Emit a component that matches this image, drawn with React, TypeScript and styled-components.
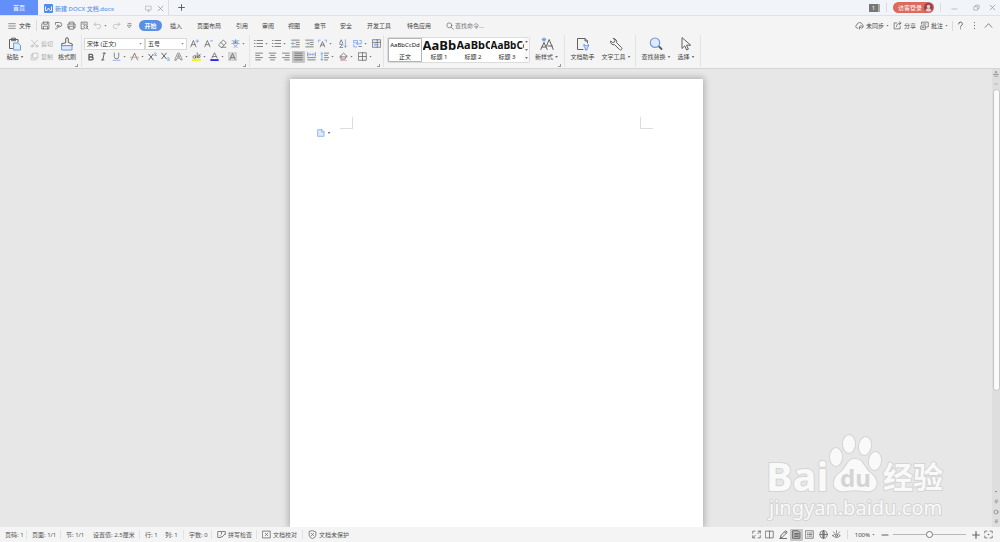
import React from "react";
import styled, { createGlobalStyle, css } from "styled-components";

const Global = createGlobalStyle`
  * { box-sizing: border-box; }
  html, body { margin: 0; padding: 0; }
  body, button, select, input {
    font-family: "Noto Sans", "Noto Sans CJK SC", sans-serif;
    font-size: 6px;
    line-height: 8px;
    color: #444;
  }
  button {
    margin: 0; padding: 0; border: 0; background: none;
    display: inline-flex; align-items: center; justify-content: center;
    white-space: nowrap; cursor: pointer;
  }
  svg { display: block; flex: none; }
`;

const INK = "#606060";
const BLUE = "#6a9be8";

/* ---------- icons ---------- */

const Svg = styled.svg<{ $size: number }>`
  width: ${(p) => p.$size}px;
  height: ${(p) => p.$size}px;
  fill: none;
  stroke: ${INK};
  stroke-width: 1;
  stroke-linecap: round;
  stroke-linejoin: round;
  .b { stroke: ${BLUE}; }
  .f { fill: ${INK}; stroke: none; }
  .lb { fill: #dfeafb; stroke: ${BLUE}; }
`;

const shapes: Record<string, React.ReactNode> = {
  menu: <path d="M1 2.5h10M1 6h10M1 9.5h10" />,
  save: <><path d="M1.5 3 3 1.5h7.5v9h-9zM3.5 1.5v2.8h5V1.5M3.2 10.500V7h5.600v3.500" /></>,
  output: <><path d="M2 4.500V2h5.500a2.800 2.800 0 0 1 0 5.600H5.500" /><path d="M2 10.500c2.500 0 3.500-1 3.500-4M3.500 7l2-2 2 2" /></>,
  print: <><path d="M3 4V1.500h6V4M3 9H1.200V4h9.600v5H9" /><path d="M3 7h6v3.800H3zM8.500 5.500h.5" /></>,
  preview: <><path d="M5 10.500H1.500v-9h8V5" /><circle cx="7.500" cy="7.500" r="2.300" /><path d="m9.300 9.300 1.800 1.800M3.500 4h3" /></>,
  undo: <path stroke="#b8b8b8" d="M3.500 2 1.500 4.500l2.500 2M1.500 4.500h6a2.700 2.700 0 0 1 0 5.500H6" />,
  redo: <path stroke="#b8b8b8" d="m8.500 2 2 2.500-2.500 2M10.500 4.500h-6a2.700 2.700 0 0 0 0 5.500H6" />,
  more: <path d="M3.500 2.500h5M3 5.500h6L6 9.500z" />,
  split: <path d="M1 7h10M3 10.500h6M6 1v4M4 3l2-2 2 2" />,
  search: <><circle cx="5" cy="5" r="3.700" /><path d="m7.800 7.800 3.200 3.200" /></>,
  cloud: <><path d="M4 9.500H3a2.300 2.300 0 0 1-.3-4.500A3.500 3.500 0 0 1 9.500 4.500a2.500 2.500 0 0 1 1 4" /><path d="M6 8.500a2 2 0 1 1 3 1.500M6 10.800V8.500h2" /></>,
  share: <path d="M5 2.500H1.500v8h8V7M4.500 7.500c0-3 2-4.500 6-4.500M8.500 1l2.200 2-2.200 2" />,
  note: <><path d="M2 4V1.500h9v6.500H9M4 4h4" /><path d="M1 10.500v-4h6.500v4zM3 8.500h2.500" /></>,
  help: <path d="M3.500 4A2.500 2.500 0 1 1 7 6.200Q6 6.800 6 8M6 10.300v.2" strokeWidth="1.300" />,
  dots: <path d="M6 2v.1M6 6v.1M6 10v.1" strokeWidth="1.600" />,
  up: <path d="m1.500 8.500 4.500-5 4.500 5" />,
  monitor: <path stroke="#a0a5b0" d="M1.500 2h9v6.500h-9zM4.500 10.500h3M6 8.500v2" />,
  close: <path stroke="#8c8c8c" strokeWidth="1.200" d="m2 2 8 8M10 2l-8 8" />,
  plus: <path d="M6 1v10M1 6h10" strokeWidth="1.700" />,
  minus: <path d="M1.500 6h9" strokeWidth="1.800" />,
  min: <path stroke="#999" d="M1.500 8.500h9" />,
  restore: <path stroke="#999" d="M2 4.500h6v6H2zM4.500 4.500V2h6v6H8" />,
  cut: <g stroke="#bbb"><path d="m2 1.500 6 7M10 1.500l-6 7" /><circle cx="2.800" cy="9.500" r="1.400" /><circle cx="9.200" cy="9.500" r="1.400" /></g>,
  copy: <g stroke="#bbb"><path d="M4 1.500h6.500V8H4z" /><path d="M4 3.500H1.500v7H8V8" /></g>,
  grow: <><path d="m1 10.500 3.500-8.500L8 10.500M2.200 7.500h4.600" /><path className="b" d="M8 2.800h3.500M9.700 1v3.600" /></>,
  shrink: <><path d="m1 10.500 3.500-8.500L8 10.500M2.200 7.500h4.600" /><path className="b" d="M8.500 2.500h3" /></>,
  eraser: <path d="m1 7.500 6-6 4 3.500-5.500 6H4zM3.800 4.700l4 3.700M5.500 11h5" />,
  pinyin: <><path className="b" d="M1.500 2.500h9M6 .8v4.700M1 6h10M3.500 7.500l5 4M8.500 7.500l-5 4" /><path d="M3.500 4.300h5" /></>,
  bold: <path strokeWidth="2" d="M3 2h3.500a2 2 0 0 1 0 4H3zM3 6h4a2.200 2.200 0 0 1 0 4.400H3z" />,
  italic: <path strokeWidth="1.300" d="M5.500 1.500h3M3.500 10.500h3M7 1.500l-2 9" />,
  underline: <><path d="M3 1.500v4.500a3 3 0 0 0 6 0V1.500" /><path className="b" d="M1.500 11h9" /></>,
  strike: <><path d="m2 10.500 4-9 4 9" /><path stroke="#e08080" d="M.5 7h11" /></>,
  sup: <><path strokeWidth="1.300" d="m1 3 6 7.500M7 3l-6 7.500" /><path className="b" d="M8.500 1.500q2-1 2.500.5 0 1-2.500 2.500h3" /></>,
  sub: <><path strokeWidth="1.300" d="m1 1.500 6 7.500M7 1.500l-6 7.500" /><path className="b" d="M8.500 8q2-1 2.500.5 0 1-2.500 2.500h3" /></>,
  effect: <path d="M1 10.500 4.800 1.500h2.400l3.800 9H8.800L8 8.200H4.200l-1 2.300zM5 6.300 6 3.500l1 2.800z" strokeWidth=".8" />,
  highlight: <><path fill="#f2f233" stroke="none" d="M0 9h12v3H0z" /><path d="M5 7.500A1.900 1.900 0 1 0 1.300 7 1.900 1.900 0 0 0 5 7M5 4.500V8M7 1v6.500M7 6a1.900 1.900 0 1 0 1.500-2" /><path d="m8 7 3-4" /></>,
  color: <><path d="M2.500 8 6 1l3.500 7M3.700 6h4.600" /><path fill="#2a2af0" stroke="none" d="M.5 9.500h11V12H.5z" /></>,
  shade: <><path fill="#d4d4d4" stroke="none" d="M0 0h12v12H0z" /><path d="M2.500 10 6 2l3.500 8M3.700 7.500h4.600" /></>,
  bullets: <><path d="M4 2h7.500M4 6h7.500M4 10h7.500" /><path strokeWidth="1.600" d="M1 2h.2M1 6h.2M1 10h.2" /></>,
  outdent: <><path d="M1 1.500h10M7 4.500h4M7 7.500h4M1 10.500h10" /><path className="b" d="M1 6h4.500M3 4 1 6l2 2" /></>,
  indent: <><path d="M1 1.500h10M7 4.500h4M7 7.500h4M1 10.500h10" /><path className="b" d="M1 6h4.500M3.500 4l2 2-2 2" /></>,
  scaleA: <><path d="m3 10.500 3-7 3 7M4 8h4" /><path className="b" d="M.5 4V1.500H3M9 1.500h2.500V4" /></>,
  sort: <><path d="m1 5.500 2-4.500 2 4.500M1 7h4l-4 4.500h4" /><path className="b" d="M8.500 1v10M6.500 9l2 2 2-2" /></>,
  arrange: <><path className="b" d="M1 2h5v3H1zM9 2h2v4.500H5M6.500 5 5 6.500 6.500 8M1 7.500v3h4" /><path d="M8 10h3" /></>,
  tabs: <><path d="M1 1h10.500v10H1zM7 1v10M1 4.500h10.500" /><path className="b" d="M3 7.500h6M4.500 6 3 7.500 4.500 9" /></>,
  left: <path d="M1 1.500h9M1 4.500h5M1 7.500h9M1 10.500h6" />,
  center: <path d="M1.500 1.500h9M3.500 4.500h5M1.500 7.500h9M3.500 10.500h5" />,
  right: <path d="M2 1.500h9M6 4.500h5M2 7.500h9M5 10.500h6" />,
  justify: <path d="M1 1.500h10M1 4.500h10M1 7.500h10M1 10.500h10" />,
  spread: <><path d="M1 1v4.500M11 1v4.500M1 7.500h10M1 10.500h10" /><path className="b" d="M3 3.200h6M4.300 2 3 3.200l1.300 1.300M7.700 2 9 3.200 7.700 4.500" /></>,
  spacing: <><path d="M6 1.500h5.500M6 4.500h4M6 7.500h5.500M6 10.500h4" /><path className="b" d="M2.500 1v10M1 2.500 2.500 1 4 2.500M1 9.500 2.500 11 4 9.500" /></>,
  bucket: <><path d="M.8 6.500 6 1.500l4.500 4M2.500 5.500v4h5.500l2.500-4M3 6.500h6" /><path stroke="#d99" d="M2 11.500h8" /></>,
  border: <path d="M1 1h10v10H1zM6 1v10M1 6h10" />,
  target: <circle cx="6" cy="6" r="4" />,
  read: <path d="M1 1.500h10v9H1zM6 1.500v9" />,
  pen: <path strokeWidth="1.200" d="m2 10 1-3.500L9 1l2 2-6 6zM1 11.300h9M7.500 2.500l2 2" />,
  page: <path strokeWidth="1.300" d="M1.500 1h6.500l2.500 2.500V11h-9zM3.500 4.500h5M3.500 6.500h5M3.500 8.500h5" />,
  outline: <path d="M1 1h10v10H1zM3 4h.4M5 4h4M5 6h4M3 6h.4M3 8.200h.4M5 8.200h4" />,
  globe: <><circle cx="6" cy="6" r="5" /><path d="M1 6h10M6 1v10M6 1Q2 6 6 11M6 1q4 5 0 10" /></>,
  eye: <><path d="M1 7.500Q6 2.500 11 7.500 6 12.500 1 7.500zM6 1v2M2 2.500l1.200 1.500M10 2.500 8.800 4" /><circle cx="6" cy="7.500" r="1.300" /></>,
  full: <path d="M1 4.500V1.500h3M8 1.500h3M11 1.500 7.500 5M11 1.500v3M1 7.500v3h3M1 10.500 4.500 7M11 7.500v3H8" />,
  fit: <><path d="M1 4V1.500h3M8 1.500h3V4M1 8v2.500h3M8 10.500h3V8" /><circle cx="6" cy="6" r="1.100" className="f" /></>,
  spell: <path d="M5 10H1V2h4.500l.5.500.5-.5H11v4M6 2.500v3M4.500 7.500l2 2L11 5" />,
  proof: <path d="M1 1.500h10v9H1zM4.500 4.500l3 3M7.500 4.500l-3 3" />,
  shield: <path d="m6 1 4.500 1.500V7Q10 10 6 11.500 2 10 1.500 7V2.500zM4.500 4.500l3 3M7.500 4.500l-3 3" />,
  docmark: <path className="lb" d="M1.500 1h6l3 3v7h-9zM7 1v3.500h3.500" />,
  paste: <><path d="M4.500 11.500h-3v-9h8.500v2.500M4 1.200h3.500v2.500H4z" /><path className="lb" d="M6 6h4l2.500 2.300v4.700H6z" /></>,
  brush: <><path d="M5.700 5.500V2a1.300 1.300 0 0 1 2.600 0v3.500l4 1.500v1.700H1.700V7z" /><path className="lb" d="M2 8.700h10V13H2z" /></>,
  newstyle: <><path d="m.8 12.500 3.200-7 3.200 7M2 10h4" /><path d="m6.500 9 2.700-6.500 4 10M8 9h4.500" /><path className="b" d="M4 .8v3.600M2.200 2.600h3.600M2.700 1.300l2.600 2.600M5.300 1.300 2.700 3.900" /></>,
  helper: <><path d="M7 12.500H1.500v-11H9L11.500 4v2M9 1.500V4h2.500" /><path className="lb" d="M8 7.500v2.200l1.300 1v2.300h1.800v-2.300l1.400-1V7.500l-1.400 1.300H9.400z" /></>,
  wrench: <path d="M4.500 1.500 6 3.300 5.500 5 3.700 5.600 1.600 4a3.200 3.200 0 0 0 4 3.700l4.900 4.800a1.200 1.200 0 0 0 2-2L7.600 5.700a3.200 3.200 0 0 0-3.100-4.200z" />,
  find: <><path strokeWidth="2" d="m10 9.500 2.500 2.500" /><circle className="lb" cx="6" cy="5.700" r="4.700" strokeWidth="1.200" /></>,
  cursor: <path d="M3 1v10.500l2.700-2.600 2 4.100 1.700-.8-1.900-4h3.800z" />,
};

const BIG = new Set(["paste", "brush", "newstyle", "helper", "wrench", "find", "cursor"]);

function Icon({ name, size }: { name: string; size?: number }) {
  const box = BIG.has(name) ? 14 : 12;
  return (
    <Svg $size={size ?? (BIG.has(name) ? 14 : 9)} viewBox={`0 0 ${box} ${box}`} aria-hidden="true">
      {shapes[name]}
    </Svg>
  );
}

const Caret = styled.i`
  flex: none;
  width: 3px;
  height: 2px;
  background: #777;
  clip-path: polygon(0 0, 100% 0, 50% 100%);
`;

/* ---------- frame ---------- */

const Window = styled.div`
  display: flex;
  flex-direction: column;
  height: 100vh;
  overflow: hidden;
  background: #e7e7e7;
`;

const TitleBar = styled.header`
  display: flex;
  align-items: stretch;
  flex: none;
  height: 16px;
  background: #f1f4f9;
  border-bottom: 1px solid #dde2ea;
`;

const HomeTab = styled.button`
  width: 38px;
  background: #6390f8;
  color: #fff;
`;

const FileTab = styled.div`
  display: flex;
  align-items: center;
  gap: 2px;
  width: 131px;
  padding: 2px 1px 0 6px;
  border-right: 1px solid #d9dee6;
  background: #f3f5f9;
  color: #5a93ea;
`;

const FileTitle = styled.span`
  flex: 1;
  font-weight: 500;
  white-space: nowrap;
`;

const WpsMark = styled.span`
  display: grid;
  place-items: center;
  width: 9px;
  height: 9px;
  background: #4c8df0;
  border-radius: 1px;
`;

const Spacer = styled.div`
  flex: 1;
`;

const Cluster = styled.div<{ $gap: number; $right?: number }>`
  display: flex;
  align-items: center;
  gap: ${(p) => p.$gap}px;
  padding-right: ${(p) => p.$right ?? 0}px;
`;

const AddTab = styled.button`
  width: 25px;
`;

const Count = styled.span`
  width: 11px;
  height: 8px;
  background: #777;
  border-right: 2px solid #aaa;
  color: #fff;
  text-align: center;
`;

const Rule = styled.i<{ $h: number }>`
  flex: none;
  width: 1px;
  height: ${(p) => p.$h}px;
  background: #dadada;
`;

const Login = styled.button`
  gap: 2px;
  height: 11px;
  padding: 0 1px 0 5px;
  border-radius: 6px;
  background: #d96a5c;
  color: #fff;
`;

/* ---------- menu row ---------- */

const MenuRow = styled.nav`
  display: flex;
  align-items: center;
  flex: none;
  height: 19px;
  background: #f4f4f4;
`;

const FileMenu = styled.button`
  gap: 3px;
  width: 36px;
  padding-left: 3px;
  color: #333;
`;

const QuickBar = styled.div`
  display: flex;
  align-items: center;
  padding-left: 2px;
`;

const Tool = styled.button<{ $w: number; $on?: boolean; $caret?: boolean }>`
  flex: none;
  gap: 2px;
  width: ${(p) => p.$w}px;
  height: 12px;
  ${(p) =>
    p.$caret &&
    css`
      justify-content: flex-start;
      padding-left: 2px;
    `}
  ${(p) =>
    p.$on &&
    css`
      background: #c6c6c6;
      border-radius: 1px;
    `}
`;

const Tab = styled.button<{ $long?: boolean; $on?: boolean }>`
  width: ${(p) => (p.$long ? 40 : 26)}px;
  color: #444;
  ${(p) =>
    p.$on &&
    css`
      width: 23px;
      height: 11px;
      margin: 0 1px 0 3px;
      border-radius: 6px;
      background: #5a8fe6;
      color: #fff;
      font-weight: 700;
    `}
`;

const Search = styled.label`
  display: flex;
  align-items: center;
  gap: 1px;
  margin-left: 7px;
  input {
    width: 50px;
    padding: 0;
    border: 0;
    background: none;
    outline: 0;
    &::placeholder { color: #777; }
  }
`;

const Link = styled.button`
  gap: 2px;
`;

/* ---------- ribbon ---------- */

const Ribbon = styled.section`
  display: flex;
  align-items: stretch;
  flex: none;
  height: 34px;
  padding-bottom: 1px;
  background: #f4f4f4;
  border-bottom: 1px solid #d4d4d4;
`;

const Group = styled.div<{ $w: number; $gap?: number; $pad?: number }>`
  position: relative;
  display: flex;
  gap: ${(p) => p.$gap ?? 0}px;
  width: ${(p) => p.$w}px;
  padding: 2px 0 0 ${(p) => p.$pad ?? 2}px;
  border-right: 1px solid #e4e4e4;
`;

const Launcher = styled.button`
  position: absolute;
  right: 3px;
  bottom: 0;
  width: 3px;
  height: 3px;
  border: solid #999;
  border-width: 0 1px 1px 0;
`;

const Stack = styled.div`
  display: flex;
  flex-direction: column;
`;

const Row = styled.div`
  display: flex;
  align-items: center;
  height: 13px;
`;

const Big = styled.button<{ $w: number }>`
  flex: none;
  flex-direction: column;
  justify-content: flex-start;
  gap: 2px;
  width: ${(p) => p.$w}px;
  height: 28px;
  color: #444;
`;

const BigLabel = styled.span`
  display: flex;
  align-items: center;
  gap: 2px;
`;

const Small = styled.button`
  gap: 2px;
  height: 13px;
  color: #aaa;
`;

const Picker = styled.label<{ $w: number }>`
  display: flex;
  align-items: center;
  width: ${(p) => p.$w}px;
  height: 12px;
  padding-right: 2px;
  border: 1px solid #d8d8d8;
  background: #fff;
  select {
    flex: 1;
    min-width: 0;
    height: 10px;
    padding: 0 0 0 2px;
    border: 0;
    appearance: none;
    background: none;
    color: #333;
  }
`;

const Gallery = styled.div`
  display: flex;
  width: 143px;
  height: 26px;
  border: 1px solid #dcdcdc;
  border-radius: 2px;
  background: #fff;
`;

const StyleCard = styled.button<{ $on?: boolean }>`
  flex: none;
  flex-direction: column;
  justify-content: flex-end;
  gap: 1px;
  width: 34px;
  height: 24px;
  padding-bottom: 1px;
  overflow: hidden;
  color: #222;
  ${(p) => p.$on && css`box-shadow: inset 0 0 0 1px #b4b4b4; border-radius: 1px;`}
`;

const Sample = styled.span<{ $size: number }>`
  display: flex;
  align-items: center;
  justify-content: ${(p) => (p.$size > 6 ? "flex-start" : "center")};
  width: 33px;
  height: 14px;
  overflow: hidden;
  font-size: ${(p) => p.$size}px;
  font-weight: ${(p) => (p.$size > 6 ? 700 : 400)};
  color: #111;
`;

const GalleryNav = styled.div`
  display: flex;
  flex: 1;
  flex-direction: column;
  align-items: center;
  justify-content: space-around;
  background: #f8f8f8;
`;

/* ---------- workspace ---------- */

const Workspace = styled.main`
  position: relative;
  display: flex;
  flex: 1;
  min-height: 0;
`;

const Desk = styled.div`
  display: flex;
  flex: 1;
  justify-content: center;
  padding-top: 10px;
  overflow: hidden;
`;

const Paper = styled.article`
  width: 413px;
  padding: 38px 27px;
  background: #fff;
  box-shadow: 0 0 7px 1px rgba(0, 0, 0, 0.28);
`;

const Corners = styled.div`
  display: flex;
  justify-content: space-between;
  padding: 0 23px;
`;

const Corner = styled.i<{ $side: "left" | "right" }>`
  width: 13px;
  height: 12px;
  border-bottom: 1px solid #ddd;
  border-${(p) => (p.$side === "left" ? "right" : "left")}: 1px solid #ddd;
`;

const Mark = styled.button`
  gap: 3px;
`;

const ScrollTrack = styled.aside`
  display: flex;
  flex-direction: column;
  align-items: center;
  gap: 1px;
  width: 8px;
  padding: 0 0 1px;
  background: #dedede;
`;

const Thumb = styled.div`
  flex: 0 0 66%;
  width: 7px;
  border: 1px solid #c4c4c4;
  border-radius: 4px;
  background: #fafafa;
`;

const Step = styled.button`
  width: 8px;
  height: 9px;
`;

const Watermark = styled.svg`
  position: absolute;
  right: 50px;
  bottom: 4px;
  width: 186px;
  height: 92px;
  fill: #f9f9f9;
  stroke: #d4d4d4;
  stroke-width: 2;
  stroke-linejoin: round;
  paint-order: stroke;
  font-family: "Noto Sans", "Noto Sans CJK SC", sans-serif;
  pointer-events: none;
  .inner { fill: #d4d4d4; stroke: none; }
`;

/* ---------- status bar ---------- */

const StatusBar = styled.footer`
  display: flex;
  align-items: center;
  flex: none;
  height: 15px;
  background: #f4f4f4;
  color: #555;
`;

const Cell = styled.span<{ $w: number; $line?: boolean }>`
  display: flex;
  align-items: center;
  gap: 2px;
  width: ${(p) => p.$w}px;
  height: 9px;
  padding-left: 5px;
  white-space: nowrap;
  border-right: ${(p) => (p.$line ? "1px solid #e2e2e2" : "0")};
`;

const Zoom = styled.input`
  width: 73px;
  height: 9px;
  margin: 0 3px 0 2px;
  appearance: none;
  background: none;
  &::-webkit-slider-runnable-track {
    height: 1px;
    background: #b8b8b8;
  }
  &::-webkit-slider-thumb {
    appearance: none;
    width: 7px;
    height: 7px;
    margin-top: -3px;
    border: 1px solid #777;
    border-radius: 50%;
    background: #fff;
  }
`;

function T({ n, label, caret, w, on, size }: { n: string; label: string; caret?: boolean; w?: number; on?: boolean; size?: number }) {
  return (
    <Tool aria-label={label} $w={w ?? (caret ? 18 : 13)} $on={on} $caret={caret}>
      <Icon name={n} size={size} />
      {caret && <Caret />}
    </Tool>
  );
}

function BigTool({ n, label, w, caret }: { n: string; label: string; w: number; caret?: boolean }) {
  return (
    <Big $w={w}>
      <Icon name={n} />
      <BigLabel>
        {label}
        {caret && <Caret />}
      </BigLabel>
    </Big>
  );
}

const tabs = ["插入", "页面布局", "引用", "审阅", "视图", "章节", "安全", "开发工具", "特色应用"];

const samples = [
  { text: "AaBbCcDd", name: "正文", size: 6 },
  { text: "AaBb", name: "标题 1", size: 13 },
  { text: "AaBbC", name: "标题 2", size: 11 },
  { text: "AaBbCc", name: "标题 3", size: 10 },
];

export default function App() {
  return (
    <Window>
      <Global />
      <TitleBar>
        <HomeTab>首页</HomeTab>
        <FileTab>
          <WpsMark>
            <svg width="7" height="5" viewBox="0 0 14 10" fill="none" stroke="#fff" strokeWidth="1.800" aria-hidden="true">
              <path d="M1 1v8h3l3-5 3 5h3V1" />
            </svg>
          </WpsMark>
          <FileTitle>新建 DOCX 文档.docx</FileTitle>
          <Icon name="monitor" size={7} />
          <T n="close" label="关闭标签" size={7} />
        </FileTab>
        <AddTab aria-label="新建标签">
          <Icon name="plus" size={7} />
        </AddTab>
        <Spacer />
        <Cluster $gap={6}>
          <Count>1</Count>
          <Rule $h={9} />
          <Login>
            访客登录
            <svg width="9" height="9" viewBox="0 0 18 18" aria-hidden="true">
              <circle cx="9" cy="9" r="9" fill="#8d4450" />
              <circle cx="9" cy="7" r="3.500" fill="#efc7c3" />
              <path d="M3 15q1-5 6-5t6 5q-6 5-12 0z" fill="#efc7c3" />
            </svg>
          </Login>
          <Rule $h={9} />
        </Cluster>
        <Cluster $gap={3} $right={1}>
          <T n="min" label="最小化" w={26} size={7} />
          <T n="restore" label="还原" size={7} />
          <T n="close" label="关闭" size={7} />
        </Cluster>
      </TitleBar>

      <MenuRow>
        <FileMenu><Icon name="menu" size={8} />文件</FileMenu>
        <Rule $h={11} />
        <QuickBar>
          <T n="save" label="保存" />
          <T n="output" label="输出" />
          <T n="print" label="打印" />
          <T n="preview" label="打印预览" />
          <T n="undo" label="撤销" caret />
          <T n="redo" label="恢复" w={14} />
          <T n="more" label="更多" size={7} />
        </QuickBar>
        <Tab $on>开始</Tab>
        {tabs.map((t) => (
          <Tab key={t} $long={t.length > 2}>{t}</Tab>
        ))}
        <Search>
          <Icon name="search" size={8} />
          <input placeholder="查找命令..." aria-label="查找命令" />
        </Search>
        <Spacer />
        <Cluster $gap={4}>
          <Link><Icon name="cloud" />未同步<Caret /></Link>
          <Link><Icon name="share" />分享</Link>
          <Link><Icon name="note" />批注<Caret /></Link>
          <Rule $h={10} />
        </Cluster>
        <Cluster $gap={1} $right={5}>
          <T n="help" label="帮助" w={14} />
          <T n="dots" label="更多选项" />
          <T n="up" label="收起功能区" />
        </Cluster>
      </MenuRow>

      <Ribbon>
        <Group $w={82} $pad={0}>
          <BigTool n="paste" label="粘贴" w={30} caret />
          <Stack>
            <Small><Icon name="cut" />剪切</Small>
            <Small><Icon name="copy" />复制</Small>
          </Stack>
          <BigTool n="brush" label="格式刷" w={28} />
          <Launcher aria-label="剪贴板设置" />
        </Group>

        <Group $w={168}>
          <Stack>
            <Row>
              <Picker $w={61}>
                <select aria-label="字体" defaultValue="a"><option value="a">宋体 (正文)</option></select>
                <Caret />
              </Picker>
              <Picker $w={42}>
                <select aria-label="字号" defaultValue="a"><option value="a">五号</option></select>
                <Caret />
              </Picker>
              <T n="grow" label="增大字号" w={14} />
              <T n="shrink" label="减小字号" w={14} />
              <T n="eraser" label="清除格式" w={14} />
              <T n="pinyin" label="拼音指南" caret />
            </Row>
            <Row>
              <T n="bold" label="加粗" size={8} />
              <T n="italic" label="倾斜" />
              <T n="underline" label="下划线" caret />
              <T n="strike" label="删除线" caret />
              <T n="sup" label="上标" />
              <T n="sub" label="下标" />
              <T n="effect" label="文字效果" caret />
              <T n="highlight" label="突出显示" caret />
              <T n="color" label="字体颜色" caret />
              <T n="shade" label="字符底纹" />
            </Row>
          </Stack>
          <Launcher aria-label="字体设置" />
        </Group>

        <Group $w={134}>
          <Stack>
            <Row>
              <T n="bullets" label="项目符号" caret />
              <T n="bullets" label="编号" caret />
              <T n="outdent" label="减少缩进" w={14} />
              <T n="indent" label="增加缩进" w={14} />
              <T n="scaleA" label="中文版式" w={19} caret />
              <T n="sort" label="排序" w={16} />
              <T n="arrange" label="显示标记" w={18} caret />
              <T n="tabs" label="制表位" w={14} />
            </Row>
            <Row>
              <T n="left" label="左对齐" w={14} />
              <T n="center" label="居中" />
              <T n="right" label="右对齐" />
              <T n="justify" label="两端对齐" on />
              <T n="spread" label="分散对齐" />
              <T n="spacing" label="行距" w={19} caret />
              <T n="bucket" label="底纹颜色" w={19} caret />
              <T n="border" label="边框" w={19} caret />
            </Row>
          </Stack>
          <Launcher aria-label="段落设置" />
        </Group>

        <Group $w={181} $gap={2} $pad={3}>
          <Gallery>
            {samples.map((s, i) => (
              <StyleCard key={s.name} $on={i === 0}>
                <Sample $size={s.size}>{s.text}</Sample>
                {s.name}
              </StyleCard>
            ))}
            <GalleryNav><Caret /><Caret /><Caret /></GalleryNav>
          </Gallery>
          <BigTool n="newstyle" label="新样式" w={29} caret />
          <Launcher aria-label="样式设置" />
        </Group>

        <Group $w={71} $gap={1}>
          <BigTool n="helper" label="文档助手" w={31} />
          <BigTool n="wrench" label="文字工具" w={34} caret />
        </Group>

        <Group $w={65} $gap={2} $pad={4}>
          <BigTool n="find" label="查找替换" w={32} caret />
          <BigTool n="cursor" label="选择" w={24} caret />
        </Group>
      </Ribbon>

      <Workspace>
        <Desk>
          <Paper>
            <Corners>
              <Corner $side="left" />
              <Corner $side="right" />
            </Corners>
            <Mark aria-label="段落布局"><Icon name="docmark" size={8} /><Caret /></Mark>
          </Paper>
        </Desk>
        <ScrollTrack>
          <Step aria-label="拆分"><Icon name="split" size={6} /></Step>
          <Step aria-label="向上滚动"><Icon name="up" size={4} /></Step>
          <Thumb />
          <Spacer />
          <Step aria-label="向下滚动"><Caret /></Step>
          <Step aria-label="上一页"><Icon name="more" size={5} /></Step>
          <Step aria-label="选择浏览对象"><Icon name="target" size={6} /></Step>
          <Step aria-label="下一页"><Icon name="more" size={5} /></Step>
        </ScrollTrack>
        <Watermark viewBox="0 0 186 92" role="img" aria-label="Baidu 经验">
          <text x="2" y="60" fontSize="40" fontWeight="700">Bai</text>
          <ellipse cx="72" cy="26" rx="6" ry="9" />
          <ellipse cx="85" cy="13" rx="6" ry="9" />
          <ellipse cx="101" cy="15" rx="6" ry="9" transform="rotate(10 101 15)" />
          <ellipse cx="111" cy="30" rx="6" ry="9" transform="rotate(6 111 30)" />
          <path d="M91 28c8 0 9 8 14 13 6 4 9 9 7 14-2 5-7 6-12 5-6-1-12-1-18 0-6 1-10-1-12-5-1-6 2-11 7-14 6-5 6-13 14-13z" />
          <text className="inner" x="76" y="56" fontSize="24" fontWeight="700">du</text>
          <text x="119" y="57" fontSize="30" fontWeight="700">经验</text>
          <text x="5" y="84" fontSize="20">jingyan.baidu.com</text>
        </Watermark>
      </Workspace>

      <StatusBar>
        <Cell $w={27} $line>页码: 1</Cell>
        <Cell $w={34} $line>页面: 1/1</Cell>
        <Cell $w={27}>节: 1/1</Cell>
        <Cell $w={52} $line>设置值: 2.5厘米</Cell>
        <Cell $w={20}>行: 1</Cell>
        <Cell $w={24} $line>列: 1</Cell>
        <Cell $w={28} $line>字数: 0</Cell>
        <Cell $w={45} $line><Icon name="spell" />拼写检查</Cell>
        <Cell $w={46} $line><Icon name="proof" />文档校对</Cell>
        <Cell $w={50}><Icon name="shield" />文档未保护</Cell>
        <Spacer />
        <Cluster $gap={0} $right={3}>
          <T n="full" label="全屏" />
          <T n="read" label="阅读版式" w={14} />
          <T n="pen" label="写作模式" />
          <T n="page" label="页面视图" on />
          <T n="outline" label="大纲" w={14} />
          <T n="globe" label="Web 版式" />
          <T n="eye" label="护眼模式" w={14} />
        </Cluster>
        <Cluster $gap={7} $right={3}>
          <Rule $h={9} />
          <Link>100%<Caret /></Link>
        </Cluster>
        <Cluster $gap={0} $right={5}>
          <T n="minus" label="缩小" size={8} />
          <Zoom type="range" min={0} max={100} defaultValue={50} aria-label="缩放" />
          <T n="plus" label="放大" size={8} />
          <T n="fit" label="适合页面" />
        </Cluster>
      </StatusBar>
    </Window>
  );
}
